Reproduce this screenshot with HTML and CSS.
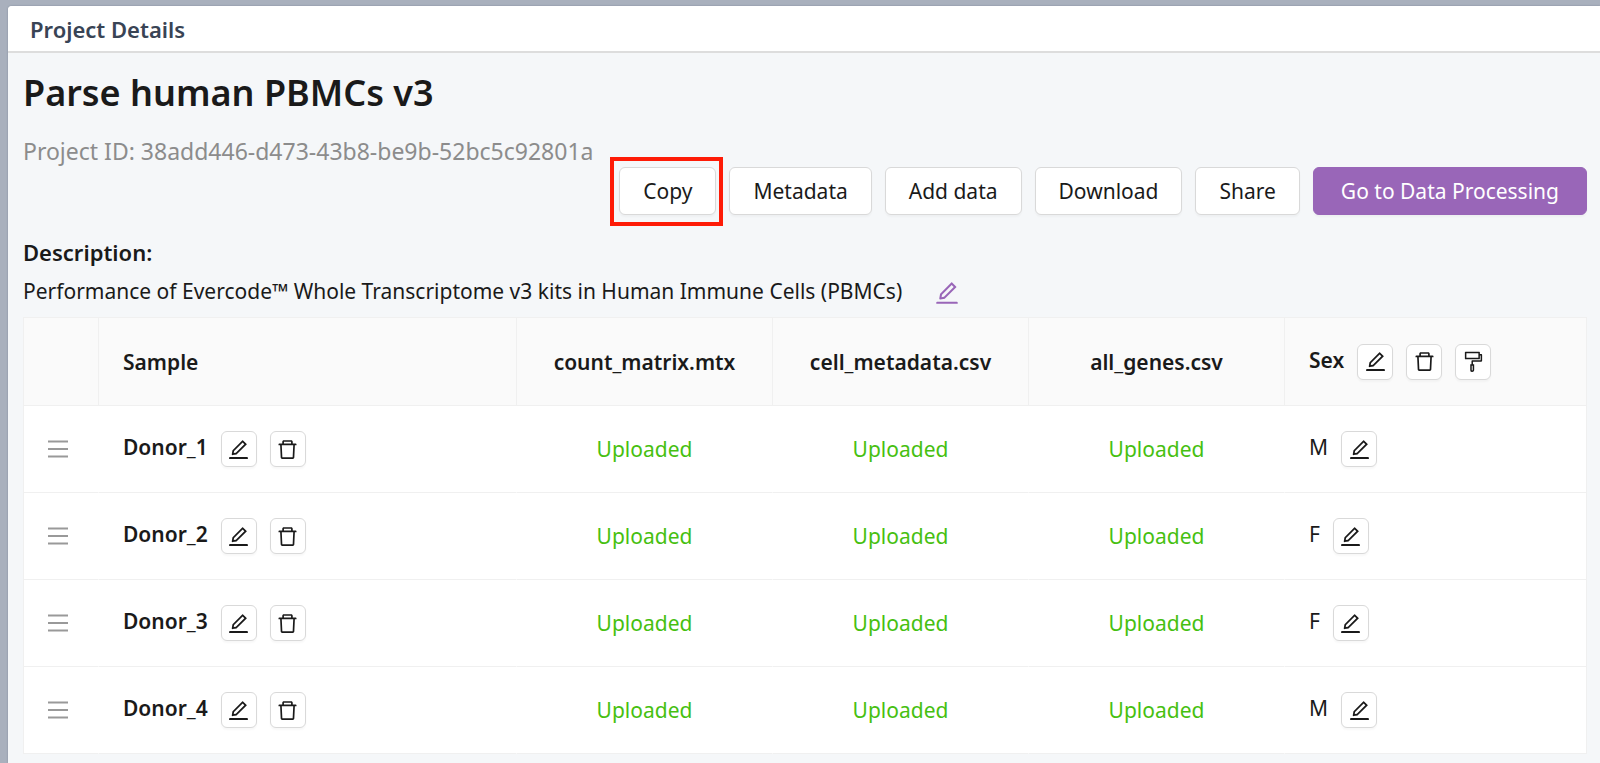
FILE: index.html
```html
<!DOCTYPE html>
<html lang="en">
<head>
<meta charset="utf-8">
<title>Project Details</title>
<link rel="stylesheet" href="styles.css">
</head>
<body>
<svg class="sprite" aria-hidden="true">
  <symbol id="edit" viewBox="64 64 896 896"><path d="M257.7 752c2 0 4-.2 6-.5L431.9 722c2-.4 3.9-1.3 5.3-2.8l423.9-423.9a9.96 9.96 0 000-14.1L694.9 114.9c-1.9-1.9-4.4-2.9-7.1-2.9s-5.2 1-7.1 2.9L256.8 538.8c-1.5 1.5-2.4 3.3-2.8 5.3l-29.5 168.2a33.5 33.5 0 009.4 29.8c6.6 6.4 14.9 9.9 23.8 9.9zm67.4-174.4L687.8 215l73.3 73.3-362.7 362.6-88.9 15.7 15.6-89zM880 836H144c-17.7 0-32 14.3-32 32v36c0 4.4 3.6 8 8 8h784c4.4 0 8-3.6 8-8v-36c0-17.7-14.3-32-32-32z"/></symbol>
  <symbol id="trash" viewBox="64 64 896 896"><path d="M360 184h-8c4.4 0 8-3.6 8-8v8h304v-8c0 4.4 3.6 8 8 8h-8v72h72v-80c0-35.3-28.7-64-64-64H352c-35.3 0-64 28.7-64 64v80h72v-72zm504 72H160c-17.7 0-32 14.3-32 32v32c0 4.4 3.6 8 8 8h60.4l24.7 523c1.6 34.1 29.8 61 63.9 61h454c34.2 0 62.3-26.8 63.9-61l24.7-523H888c4.4 0 8-3.6 8-8v-32c0-17.7-14.3-32-32-32zM731.3 840H292.7l-24.2-512h487l-24.2 512z"/></symbol>
  <symbol id="painter" viewBox="64 64 896 896"><path d="M840 192h-56v-72c0-13.3-10.7-24-24-24H168c-13.3 0-24 10.7-24 24v272c0 13.3 10.7 24 24 24h592c13.3 0 24-10.7 24-24V256h32v200H465c-22.1 0-40 17.9-40 40v136h-44c-4.4 0-8 3.6-8 8v228c0 .6.1 1.3.2 1.9A83.99 83.99 0 00457 960c46.4 0 84-37.6 84-84 0-2.1-.1-4.1-.2-6.1.1-.6.2-1.2.2-1.9V640c0-4.4-3.6-8-8-8h-44V520h351c22.1 0 40-17.9 40-40V232c0-22.1-17.9-40-40-40zM720 352H208V160h512v192zM477 876c0 11-9 20-20 20s-20-9-20-20V696h40v180z"/></symbol>
  <symbol id="menu" viewBox="0 0 20 20"><path d="M0 1.500h20v2H0zM0 9h20v2H0zM0 16.500h20v2H0z"/></symbol>
</svg>
<main class="panel">
  <header class="panel-head">Project Details</header>
  <div class="panel-body">
    <h1 class="title">Parse human PBMCs v3</h1>
    <p class="project-id">Project ID: 38add446-d473-43b8-be9b-52bc5c92801a</p>
    <div class="actions">
      <button class="btn highlighted" type="button">Copy</button>
      <button class="btn" type="button">Metadata</button>
      <button class="btn" type="button">Add data</button>
      <button class="btn" type="button">Download</button>
      <button class="btn" type="button">Share</button>
      <button class="btn primary" type="button">Go to Data Processing</button>
    </div>
    <h2 class="label">Description:</h2>
    <p class="description">Performance of Evercode™ Whole Transcriptome v3 kits in Human Immune Cells (PBMCs)
      <button class="link-btn" type="button" aria-label="Edit description"><svg class="icon large"><use href="#edit"/></svg></button></p>
    <table class="samples">
      <colgroup><col class="c-drag"><col class="c-name"><col class="c-file"><col class="c-file"><col class="c-file"><col class="c-sex"></colgroup>
      <thead>
        <tr>
          <th></th>
          <th>Sample</th>
          <th class="center">count_matrix.mtx</th>
          <th class="center">cell_metadata.csv</th>
          <th class="center">all_genes.csv</th>
          <th><div class="cell"><span class="cell-text">Sex</span>
            <button class="icon-btn" type="button" aria-label="Edit Sex"><svg class="icon"><use href="#edit"/></svg></button>
            <button class="icon-btn" type="button" aria-label="Delete Sex"><svg class="icon"><use href="#trash"/></svg></button>
            <button class="icon-btn" type="button" aria-label="Fill Sex"><svg class="icon"><use href="#painter"/></svg></button></div></th>
        </tr>
      </thead>
      <tbody>
        <tr>
          <td class="drag"><svg class="icon"><use href="#menu"/></svg></td>
          <td class="name"><div class="cell"><span class="cell-text">Donor_1</span>
            <button class="icon-btn" type="button" aria-label="Edit Donor_1"><svg class="icon"><use href="#edit"/></svg></button>
            <button class="icon-btn" type="button" aria-label="Delete Donor_1"><svg class="icon"><use href="#trash"/></svg></button></div></td>
          <td class="status">Uploaded</td><td class="status">Uploaded</td><td class="status">Uploaded</td>
          <td><div class="cell"><span class="cell-text">M</span>
            <button class="icon-btn" type="button" aria-label="Edit sex of Donor_1"><svg class="icon"><use href="#edit"/></svg></button></div></td>
        </tr>
        <tr>
          <td class="drag"><svg class="icon"><use href="#menu"/></svg></td>
          <td class="name"><div class="cell"><span class="cell-text">Donor_2</span>
            <button class="icon-btn" type="button" aria-label="Edit Donor_2"><svg class="icon"><use href="#edit"/></svg></button>
            <button class="icon-btn" type="button" aria-label="Delete Donor_2"><svg class="icon"><use href="#trash"/></svg></button></div></td>
          <td class="status">Uploaded</td><td class="status">Uploaded</td><td class="status">Uploaded</td>
          <td><div class="cell"><span class="cell-text">F</span>
            <button class="icon-btn" type="button" aria-label="Edit sex of Donor_2"><svg class="icon"><use href="#edit"/></svg></button></div></td>
        </tr>
        <tr>
          <td class="drag"><svg class="icon"><use href="#menu"/></svg></td>
          <td class="name"><div class="cell"><span class="cell-text">Donor_3</span>
            <button class="icon-btn" type="button" aria-label="Edit Donor_3"><svg class="icon"><use href="#edit"/></svg></button>
            <button class="icon-btn" type="button" aria-label="Delete Donor_3"><svg class="icon"><use href="#trash"/></svg></button></div></td>
          <td class="status">Uploaded</td><td class="status">Uploaded</td><td class="status">Uploaded</td>
          <td><div class="cell"><span class="cell-text">F</span>
            <button class="icon-btn" type="button" aria-label="Edit sex of Donor_3"><svg class="icon"><use href="#edit"/></svg></button></div></td>
        </tr>
        <tr>
          <td class="drag"><svg class="icon"><use href="#menu"/></svg></td>
          <td class="name"><div class="cell"><span class="cell-text">Donor_4</span>
            <button class="icon-btn" type="button" aria-label="Edit Donor_4"><svg class="icon"><use href="#edit"/></svg></button>
            <button class="icon-btn" type="button" aria-label="Delete Donor_4"><svg class="icon"><use href="#trash"/></svg></button></div></td>
          <td class="status">Uploaded</td><td class="status">Uploaded</td><td class="status">Uploaded</td>
          <td><div class="cell"><span class="cell-text">M</span>
            <button class="icon-btn" type="button" aria-label="Edit sex of Donor_4"><svg class="icon"><use href="#edit"/></svg></button></div></td>
        </tr>
      </tbody>
    </table>
  </div>
</main>
</body>
</html>
```
FILE: styles.css
```css
* { box-sizing: border-box; }

body {
  margin: 0;
  padding: 6px 0 0 8px;
  background: #a9b0bd;
  color: #1a1a1a;
  font: 21px/34px "Noto Sans", sans-serif;
}

button { font: inherit; color: inherit; cursor: pointer; }
h1, h2, p { margin: 0; }
.sprite { display: none; }

.panel {
  min-height: calc(100vh - 6px);
  background: #f5f7f9;
  border-top-left-radius: 4px;
  box-shadow: 0 0 2px #7d8798;
}

.panel-head {
  padding: 6px 22px 5px;
  background: #fff;
  border-bottom: 2px solid #ddd;
  border-top-left-radius: 4px;
  color: #394455;
  font-size: 22px;
  font-weight: 600;
}

.panel-body { padding: 14px 13px 8px 15px; }

.title {
  margin-bottom: 16px;
  font-size: 36px;
  line-height: 52px;
  font-weight: 600;
}

.project-id { color: #8c8c8c; font-size: 23px; line-height: 32px; }

.actions {
  display: flex;
  justify-content: flex-end;
  gap: 13px;
}

.btn {
  height: 48px;
  padding: 0 23px;
  background: #fff;
  border: 1px solid #d9d9d9;
  border-radius: 6px;
  box-shadow: 0 2px 2px rgba(0, 0, 0, 0.03);
  white-space: nowrap;
}

.btn.primary { padding: 0 27px; background: #9966b8; border-color: #9966b8; color: #fff; }

.highlighted { position: relative; }
.highlighted::after {
  content: "";
  position: absolute;
  inset: -11px -8px -12px -10px;
  border: 4px solid #fe1b07;
  pointer-events: none;
}

.label {
  margin-top: 18px;
  font-size: 22px;
  line-height: 39px;
  font-weight: 600;
}

.description { line-height: 39px; margin-bottom: 6px; }

.icon { display: block; width: 21px; height: 21px; fill: currentColor; }
.icon.large { width: 24px; height: 24px; }

.link-btn {
  display: inline-block;
  margin-left: 27px;
  padding: 0;
  border: 0;
  background: none;
  color: #9966b8;
  vertical-align: middle;
}

.samples {
  width: 100%;
  table-layout: fixed;
  border-collapse: separate;
  border-spacing: 0;
  border: 1px solid #f0f0f0;
  border-bottom: 0;
  background: #fff;
}

.c-drag { width: 74px; }
.c-name { width: 418px; }
.c-file { width: 256px; }

.samples th, .samples td {
  height: 87px;
  padding: 0 24px;
  border-bottom: 1px solid #f0f0f0;
  text-align: left;
}

.samples th { height: 88px; background: #fafafa; font-weight: 600; }
.samples th + th { border-left: 1px solid #f0f0f0; }
.samples td + td { border-left: 1px solid transparent; }
.samples .center, .samples .status { text-align: center; }
.samples .status { color: #46c010; }
.samples .name { font-weight: 600; }
.samples .drag { color: #999; }
.drag .icon { width: 20px; height: 20px; }

.cell { display: flex; align-items: center; gap: 13px; }
.cell-text { padding-bottom: 4px; }

.icon-btn {
  display: grid;
  place-items: center;
  width: 36px;
  height: 36px;
  padding: 0;
  background: #fff;
  border: 1px solid #d9d9d9;
  border-radius: 6px;
  box-shadow: 0 2px 2px rgba(0, 0, 0, 0.03);
}
```
